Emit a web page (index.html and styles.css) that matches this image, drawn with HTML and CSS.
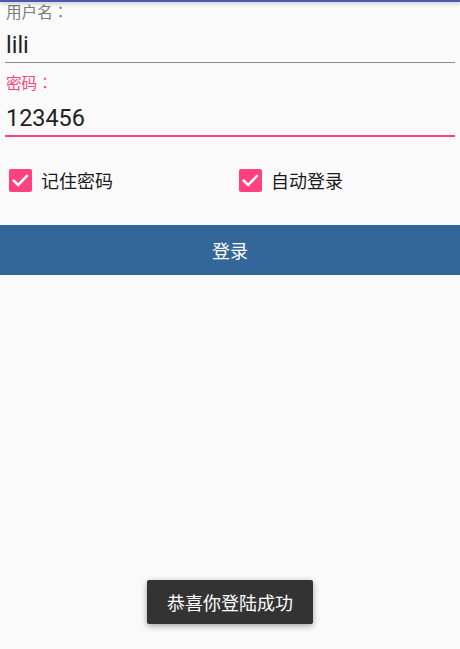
FILE: index.html
```html
<!DOCTYPE html>
<html lang="zh">
<head>
<meta charset="utf-8">
<title>登录</title>
<link rel="stylesheet" href="styles.css">
</head>
<body>
<div class="appbar-edge"></div>
<main class="screen">
  <section class="form">
    <div class="label">用户名<span class="colon" lang="zh-Hant">：</span></div>
    <div class="field">lili</div>
    <div class="label label-active">密码<span class="colon" lang="zh-Hant">：</span></div>
    <div class="field field-active">123456</div>
  </section>
  <section class="checks">
    <label class="check">
      <span class="box"><svg viewBox="0 0 24 24" width="23" height="23"><path d="M5 12.2 L9.6 16.6 L18.6 7.4" fill="none" stroke="#fff" stroke-width="2.6" stroke-linecap="square"/></svg></span>
      <span class="check-text">记住密码</span>
    </label>
    <label class="check">
      <span class="box"><svg viewBox="0 0 24 24" width="23" height="23"><path d="M5 12.2 L9.6 16.6 L18.6 7.4" fill="none" stroke="#fff" stroke-width="2.6" stroke-linecap="square"/></svg></span>
      <span class="check-text">自动登录</span>
    </label>
  </section>
  <button class="login" type="button">登录</button>
</main>
<div class="toast">恭喜你登陆成功</div>
</body>
</html>
```
FILE: styles.css
```css
html, body {
  margin: 0;
  padding: 0;
  background: #fafafa;
  width: 460px;
  height: 649px;
  overflow: hidden;
  font-family: Roboto, "Noto Sans CJK SC", sans-serif;
}
.appbar-edge {
  position: absolute;
  top: 0;
  left: 0;
  right: 0;
  height: 2px;
  background: #4a58ad;
  box-shadow: 0 1px 4px rgba(0,0,0,0.35);
  z-index: 2;
}
.screen {
  display: flex;
  flex-direction: column;
}
.form {
  padding: 0 5px;
  display: flex;
  flex-direction: column;
}
.label {
  font-family: "Noto Sans CJK SC", sans-serif;
  font-size: 15.6px;
  line-height: 20px;
  color: #7a7a7a;
  margin-top: 0.5px;
  padding-left: 1px;
}
.colon {
  font-family: "Noto Sans CJK TC", "Noto Sans CJK SC", sans-serif;
}
.label-active {
  color: #ff4081;
  margin-top: 9.5px;
}
.field {
  font-family: Roboto, "Noto Sans CJK SC", sans-serif;
  font-size: 23.4px;
  line-height: 27px;
  color: #212121;
  padding: 11.2px 0 3.3px 1px;
  border-bottom: 1px solid #8c8c8c;
}
.field-active {
  padding-top: 12.2px;
  border-bottom: 2px solid #ff4081;
}
.checks {
  display: grid;
  grid-template-columns: 1fr 1fr;
  height: 88px;
  align-items: center;
}
.check {
  display: flex;
  align-items: center;
  padding-left: 9px;
  gap: 9px;
  margin-top: -1px;
}
.box {
  width: 23px;
  height: 23px;
  background: #ff4081;
  border-radius: 2px;
  display: flex;
}
.check-text {
  font-family: "Noto Sans CJK SC", sans-serif;
  font-size: 18px;
  line-height: 24px;
  color: #1a1a1a;
}
.login {
  height: 50px;
  border: none;
  margin: 0;
  background: #336699;
  color: #fff;
  font-family: "Noto Sans CJK SC", sans-serif;
  font-size: 18px;
  padding: 0;
  width: 100%;
}
.toast {
  position: absolute;
  top: 580px;
  left: 147px;
  width: 166px;
  height: 44px;
  box-sizing: border-box;
  background: #333333;
  color: #fff;
  font-family: "Noto Sans CJK SC", sans-serif;
  font-size: 18px;
  border-radius: 2px;
  display: flex;
  align-items: center;
  justify-content: center;
  box-shadow: 0 2px 6px rgba(0,0,0,0.35);
}
```
